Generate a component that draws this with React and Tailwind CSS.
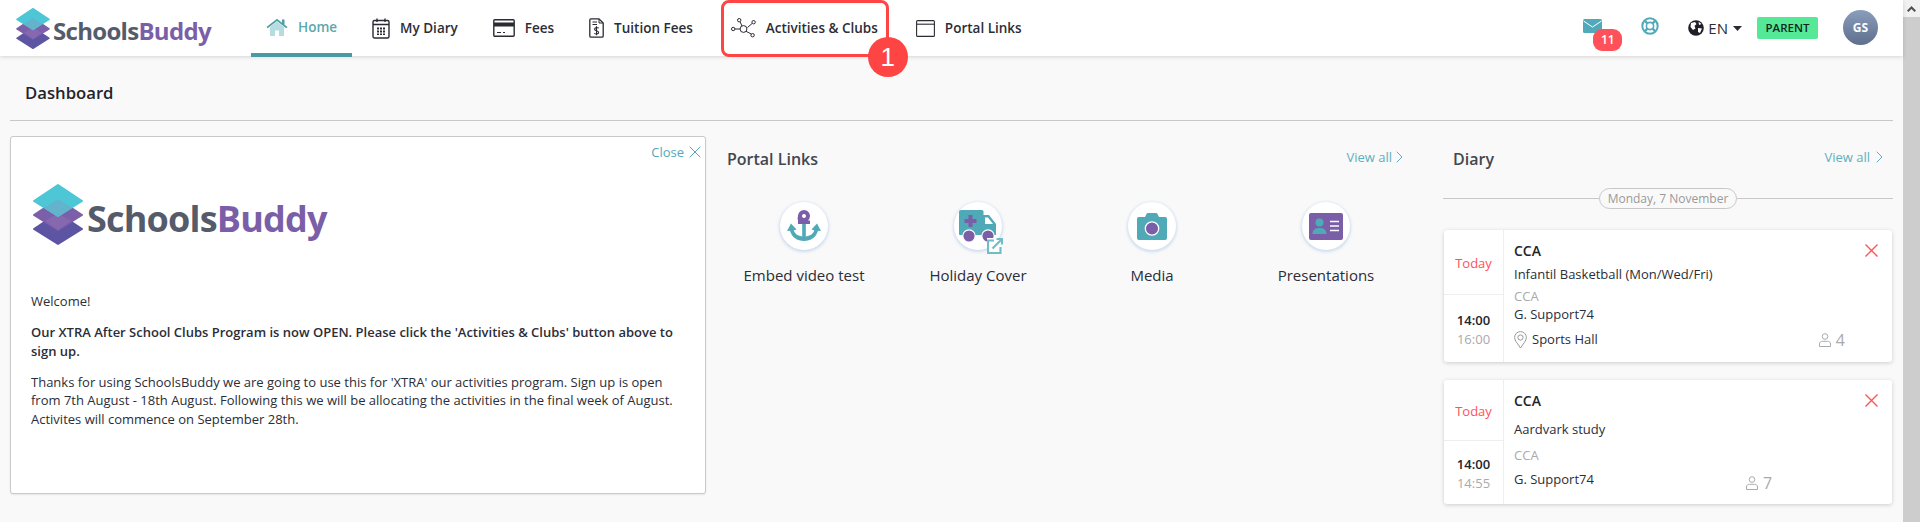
import React from "react";

function Logo({ className }) {
  return (
    <svg viewBox="0 0 50 61" className={className}>
      <g strokeLinejoin="round" strokeWidth="2">
        <polygon points="25,29 49,45 25,60 1,45" fill="#5d55a3" stroke="#5d55a3" />
        <polygon points="25,15 49,31 25,46 1,31" fill="#7c5fa9" stroke="#7c5fa9" />
        <polygon points="25,29 38,37 25,46 12,37" fill="#8568ae" />
        <polygon points="25,1 49,17 25,32 1,17" fill="#4dc6d6" stroke="#4dc6d6" />
        <polygon points="25,15 39,24 25,33 11,24" fill="#63b3cc" />
      </g>
    </svg>
  );
}

const HomeIcon = () => (
  <svg viewBox="0 0 22 18" className="w-[22px] h-[18px]">
    <path d="M4 9 L11 3.5 L18 9 V18 H13 V12.5 H9 V18 H4 Z" fill="#b5dde0" />
    <path d="M0.5 9 L11 0.8 L16 4.7 V1.5 H18.5 V6.7 L21.5 9 L20.3 10.2 L11 3 L1.7 10.2 Z" fill="#4f9ea6" />
  </svg>
);
const DiaryIcon = () => (
  <svg viewBox="0 0 18 21" className="w-[18px] h-[21px]" fill="none">
    <rect x="1" y="2.5" width="16" height="17.5" rx="1.5" stroke="#2b2b33" strokeWidth="1.4" />
    <path d="M1 6.5 H17 M5 0.5 V4 M13 0.5 V4" stroke="#2b2b33" strokeWidth="1.4" />
    <path d="M5 9.5 h2 v2 h-2z M8 9.5 h2 v2 h-2z M11 9.5 h2 v2 h-2z M5 12.5 h2 v2 h-2z M8 12.5 h2 v2 h-2z M11 12.5 h2 v2 h-2z M5 15.5 h2 v1.5 h-2z M8 15.5 h2 v1.5 h-2z M11 15.5 h2 v1.5 h-2z" fill="#2b2b33" />
  </svg>
);
const FeesIcon = () => (
  <svg viewBox="0 0 22 18" className="w-[22px] h-[18px]" fill="none">
    <rect x="0.8" y="0.8" width="20.4" height="16.4" rx="1" stroke="#2b2b33" strokeWidth="1.4" />
    <rect x="1" y="3.5" width="20" height="4" fill="#2b2b33" />
    <path d="M4 13.5 H8 M10 13.5 H12" stroke="#2b2b33" strokeWidth="1.2" />
  </svg>
);
const TuitionIcon = () => (
  <svg viewBox="0 0 15 20" className="w-[15px] h-[20px]" fill="none">
    <path d="M1.7 0.8 H10 L14.2 5 V18 a1.2 1.2 0 0 1 -1.2 1.2 H2 a1.2 1.2 0 0 1 -1.2 -1.2 V2 a1.2 1.2 0 0 1 .9 -1.2 Z" stroke="#2b2b33" strokeWidth="1.3" />
    <path d="M10 1 V5 H14 M3.5 4 H8 M3.5 6.5 H8" stroke="#2b2b33" strokeWidth="1" />
    <path d="M9.6 10.2 C9 9.3 5.6 9.2 5.6 11.2 C5.6 13.2 9.6 12.4 9.6 14.5 C9.6 16.3 6.2 16.3 5.4 15.2 M7.5 8.2 V17.2" stroke="#2b2b33" strokeWidth="1.1" />
  </svg>
);
const NetworkIcon = () => (
  <svg viewBox="0 0 25 20" className="w-[25px] h-[20px]" fill="none" stroke="#2b2b33" strokeWidth="1">
    <circle cx="2.2" cy="11" r="1.7" />
    <circle cx="8.2" cy="2.2" r="1.7" />
    <circle cx="22.6" cy="4.2" r="1.7" />
    <circle cx="21.6" cy="17.2" r="1.7" />
    <circle cx="12.5" cy="11" r="3.4" />
    <path d="M4 11 H9 M9.1 3.8 L11 8 M21.2 5.4 L16.5 9.5 M20.3 16 L15 13.3" />
  </svg>
);
const WindowIcon = () => (
  <svg viewBox="0 0 19 17" className="w-[19px] h-[17px]" fill="none" stroke="#2b2b33" strokeWidth="1.1">
    <rect x="0.6" y="0.6" width="17.8" height="15.8" rx="1" />
    <path d="M0.6 4.2 H18.4" />
  </svg>
);

const Tab = ({ icon, label, active, children, className = "" }) => (
  <div className={`relative h-[57px] flex items-center gap-[10px] px-[15px] pb-[1px] text-[13.5px] font-semibold ${active ? "border-b-[4px] border-[#4a9aa3] text-[#5ba7ae] pt-[2px] pb-0" : "text-[#2b2d38]"} ${className}`}>
    {icon}
    <span>{label}</span>
    {children}
  </div>
);

const Circle = ({ children }) => (
  <div className="relative w-[48px] h-[48px] rounded-full bg-white flex items-center justify-center shadow-[0_1px_3px_1px_rgba(170,195,230,0.55)]">
    {children}
  </div>
);

const Anchor = () => (
  <svg viewBox="0 0 34 32" className="w-[34px] h-[32px]">
    <path fillRule="evenodd" d="M17 0 a6 6 0 0 1 6 6 a6 6 0 0 1 -2.2 4.6 H23 V14 H11 V10.6 A6 6 0 0 1 11 6 A6 6 0 0 1 17 0 Z M17 4 a2 2 0 1 0 .01 0Z" fill="#7b5ea8" />
    <path d="M15.2 14 H18.8 V26.5 C23 26 26 24 27.4 20.5 L24.5 19.5 L30 13.5 L34 21 L31 20.8 C29 27.5 24 31 17 31 C10 31 5 27.5 3 20.8 L0 21 L4 13.5 L9.5 19.5 L6.6 20.5 C8 24 11 26 15.2 26.5 Z" fill="#50a9b6" />
  </svg>
);
const Ambulance = () => (
  <svg viewBox="0 0 38 32" className="w-[38px] h-[32px]">
    <path d="M2 0 H23 a1.5 1.5 0 0 1 1.5 1.5 V5 H30 L37 14 V25 H1 a1 1 0 0 1 -1 -1 V2 a2 2 0 0 1 2 -2Z" fill="#50a9b6" />
    <path d="M26 7.5 H29 L34 14 H26 Z" fill="#fff" />
    <path d="M9.5 5 H13.5 V9 H17.5 V13 H13.5 V17 H9.5 V13 H5.5 V9 H9.5 Z" fill="#7b5ea8" />
    <circle cx="10" cy="26" r="6.2" fill="#7b5ea8" stroke="#fff" strokeWidth="1.2" />
    <circle cx="29" cy="26" r="6.2" fill="#7b5ea8" stroke="#fff" strokeWidth="1.2" />
  </svg>
);
const ExternalBadge = () => (
  <svg viewBox="0 0 16 16" className="absolute right-[-1px] bottom-[-4px] w-[16px] h-[16px] bg-white" fill="none" stroke="#6fbdc6" strokeWidth="2.2">
    <path d="M7 2.5 H1 V15 H13.5 V9" />
    <path d="M5.5 10.5 L15 1 M9.5 1 H15 V6.5" />
  </svg>
);
const Camera = () => (
  <svg viewBox="0 0 30 27" className="w-[30px] h-[27px]">
    <path d="M2 4 H8 L9.5 1 a2 2 0 0 1 1.5 -1 H19 a2 2 0 0 1 1.5 1 L22 4 H28 a2 2 0 0 1 2 2 V25 a2 2 0 0 1 -2 2 H2 a2 2 0 0 1 -2 -2 V6 a2 2 0 0 1 2 -2Z" fill="#50a9b6" />
    <circle cx="15" cy="15.5" r="6.7" fill="#7b5ea8" stroke="#fff" strokeWidth="1.3" />
  </svg>
);
const IdCard = () => (
  <svg viewBox="0 0 34 27" className="w-[34px] h-[27px]">
    <rect width="34" height="27" rx="2" fill="#7b5ea8" />
    <circle cx="10.5" cy="9.5" r="4" fill="#50a9b6" />
    <path d="M3.5 21 C3.5 16 7 15 10.5 15 C14 15 17.5 16 17.5 21 Z" fill="#50a9b6" />
    <path d="M21 8.5 H30 M21 13 H30 M21 17.5 H30" stroke="#fff" strokeWidth="1.5" />
  </svg>
);

const PortalLink = ({ icon, label, badge }) => (
  <div className="flex flex-col items-center">
    <Circle>
      {icon}
      {badge && <ExternalBadge />}
    </Circle>
    <div className="mt-[15px] text-[15px] leading-[20px] text-[#2b2d38]">{label}</div>
  </div>
);

const ViewAll = ({ wide }) => (
  <div className={`flex items-center text-[13px] leading-[18px] text-[#5bb0bf] ${wide ? "gap-[6px]" : "gap-[4px]"}`}>
    <span>View all</span>
    <svg viewBox="0 0 7 12" className="w-[7px] h-[12px]" fill="none" stroke="#5bb0bf" strokeWidth="1">
      <path d="M0.7 0.7 L6 6 L0.7 11.3" />
    </svg>
  </div>
);

const RedX = () => (
  <svg viewBox="0 0 13 13" className="w-[13px] h-[13px] mt-[2px]" fill="none" stroke="#ff5159" strokeWidth="1.4">
    <path d="M0.5 0.5 L12.5 12.5 M12.5 0.5 L0.5 12.5" />
  </svg>
);

const Person = ({ className = "" }) => (
  <svg viewBox="0 0 12 14" className={`w-[12px] h-[14px] ${className}`} fill="none" stroke="#aaa" strokeWidth="1">
    <circle cx="6" cy="3.5" r="2.8" />
    <path d="M0.5 13.5 V11 C0.5 9 2 8.3 3.5 8.3 H8.5 C10 8.3 11.5 9 11.5 11 V13.5 Z" />
  </svg>
);

const Pin = () => (
  <svg viewBox="0 0 13 18" className="w-[13px] h-[18px]" fill="none" stroke="#999" strokeWidth="1">
    <path d="M6.5 17 C4 13 0.6 9.8 0.6 6.5 A5.9 5.9 0 0 1 12.4 6.5 C12.4 9.8 9 13 6.5 17 Z" />
    <circle cx="6.5" cy="6.5" r="2.6" />
  </svg>
);

const Card = ({ topH, end, height, children }) => (
  <div className="flex w-[448px] bg-white rounded-[3px] shadow-[0_1px_4px_rgba(0,0,0,0.18)] ml-[1px]" style={{ height }}>
    <div className="w-[60px] shrink-0 border-r border-[#eee] flex flex-col">
      <div className="flex items-center justify-center border-b border-[#eee] text-[13px] font-medium text-[#ff5159] pt-[4px]" style={{ height: topH }}>Today</div>
      <div className="flex-1 flex flex-col items-center justify-center text-[13px] leading-[19px] pt-[2px]">
        <span className="font-semibold text-[#22242c]">14:00</span>
        <span className="text-[#aaa]">{end}</span>
      </div>
    </div>
    <div className="flex-1 relative pl-[10px] pr-[14px]">{children}</div>
  </div>
);

export default function App() {
  return (
    <div className="flex h-[522px] w-[1920px] overflow-hidden bg-[#f9f9f9] font-['Open_Sans',sans-serif] text-[#2b2d38]">
      <div className="flex-1 min-w-0 flex flex-col">
        <header className="h-[56px] shrink-0 bg-white shadow-[0_1px_4px_rgba(0,0,0,0.15)] flex items-start relative z-10">
          <div className="w-[251px] h-[56px] flex items-center pl-[16px] shrink-0">
            <Logo className="w-[34px] h-[41px]" />
            <span className="text-[24px] font-bold tracking-[-0.7px] text-[#565b6c] mt-[5px] ml-[3px]">Schools<span className="text-[#7b5ea8]">Buddy</span></span>
          </div>
          <nav className="flex items-start gap-[5px]">
            <Tab icon={<HomeIcon />} label="Home" active />
            <Tab icon={<DiaryIcon />} label="My Diary" />
            <Tab icon={<FeesIcon />} label="Fees" />
            <Tab icon={<TuitionIcon />} label="Tuition Fees" />
            <Tab icon={<NetworkIcon />} label="Activities & Clubs" className="ml-[3px]">
              <div className="absolute left-[5px] right-[4px] top-0 h-[57px] border-[3px] border-[#ff4444] rounded-[8px]" />
              <div className="absolute left-[152px] top-[37px] w-[40px] h-[40px] rounded-full bg-[#ff4444] text-white text-[26px] font-['Liberation_Sans',sans-serif] font-normal flex items-center justify-center">1</div>
            </Tab>
            <Tab icon={<WindowIcon />} label="Portal Links" className="ml-[3px]" />
          </nav>
          <div className="ml-auto flex items-start pr-[25px]">
            <div className="relative w-[19px] h-[14px] mt-[19px]">
              <svg viewBox="0 0 19 14" className="w-[19px] h-[14px]">
                <rect width="19" height="14" rx="1.5" fill="#52a9bb" />
                <path d="M0.5 2 L9.5 8 L18.5 2" fill="none" stroke="#fff" strokeWidth="1" />
              </svg>
              <div className="absolute left-[10px] top-[10px] w-[29px] h-[22px] rounded-[9px] bg-[#ff5159] text-white text-[12px] font-semibold flex items-center justify-center">11</div>
            </div>
            <svg viewBox="0 0 18 18" className="w-[18px] h-[18px] mt-[17px] ml-[39px]" fill="none" stroke="#52a9bb">
              <circle cx="9" cy="9" r="7.7" strokeWidth="2" />
              <circle cx="9" cy="9" r="3.6" strokeWidth="1.6" />
              <path d="M3.5 3.5 L6.4 6.4 M14.5 3.5 L11.6 6.4 M3.5 14.5 L6.4 11.6 M14.5 14.5 L11.6 11.6" strokeWidth="2.4" />
            </svg>
            <svg viewBox="0 0 16 16" className="w-[16px] h-[16px] mt-[20px] ml-[29px]">
              <circle cx="8" cy="8" r="7.8" fill="#1f2027" />
              <path d="M3 3 L7 2 L8.5 4 L6.5 6 L7.5 8.5 L5 10 L2.5 7 Z M10 8 L14 8.5 L12 13 L10 12 Z M10.5 1.8 L13.5 4 L11 5 Z" fill="#fff" />
            </svg>
            <span className="text-[15px] leading-[20px] ml-[4px] mt-[18px] text-[#2b2d38]">EN</span>
            <svg viewBox="0 0 9 5" className="w-[9px] h-[5px] mt-[26px] ml-[5px]"><path d="M0 0 H9 L4.5 5 Z" fill="#2b2b33" /></svg>
            <div className="ml-[15px] mt-[17px] w-[61px] h-[22px] rounded-[2px] bg-[#55e897] text-[11.5px] font-semibold text-[#14261c] flex items-center justify-center">PARENT</div>
            <div className="ml-[25px] mt-[10px] w-[35px] h-[35px] rounded-full bg-gradient-to-b from-[#8a9dbb] to-[#5f6f8e] text-white text-[12px] font-bold flex items-center justify-center">GS</div>
          </div>
        </header>

        <main className="flex-1 min-h-0 px-[10px]">
          <div className="h-[65px] border-b border-[#c8c8c8] pl-[15px] flex items-center text-[16.7px] font-semibold text-[#22242c] pt-[9px]">Dashboard</div>
          <div className="flex mt-[15px]">
            <section className="w-[696px] h-[358px] shrink-0 bg-white border border-[#c9c9c9] rounded-[3px] shadow-[0_1px_2px_rgba(0,0,0,0.08)] pl-[20px] pr-[4px] pt-[6px]">
              <div className="flex justify-end items-center gap-[5px] text-[13px] leading-[18px] text-[#52a9bb]">
                <span>Close</span>
                <svg viewBox="0 0 12 12" className="w-[12px] h-[12px]" fill="none" stroke="#52a9bb" strokeWidth="1"><path d="M0.7 0.7 L11.3 11.3 M11.3 0.7 L0.7 11.3" /></svg>
              </div>
              <div className="flex items-center mt-[22px]">
                <Logo className="w-[50px] h-[61px] ml-[2px] shrink-0" />
                <span className="text-[36px] font-bold tracking-[-0.8px] text-[#565b6c] mt-[9px] ml-[4px]">Schools<span className="text-[#7b5ea8]">Buddy</span></span>
              </div>
              <div className="mt-[46px] pr-[15px] text-[13px] leading-[18.5px] text-[#2b2d38]">
                <p>Welcome!</p>
                <p className="mt-[12.5px] font-semibold">Our XTRA After School Clubs Program is now OPEN. Please click the 'Activities &amp; Clubs' button above to sign up.</p>
                <p className="mt-[12.5px]">Thanks for using SchoolsBuddy we are going to use this for 'XTRA' our activities program. Sign up is open from 7th August - 18th August. Following this we will be allocating the activities in the final week of August. Activites will commence on September 28th.</p>
              </div>
            </section>

            <section className="w-[696px] shrink-0 ml-[11px] pl-[10px] pr-[10px]">
              <div className="flex justify-between items-start h-[62px] pt-[12px]">
                <h2 className="text-[16px] leading-[22px] font-semibold text-[#44464f]">Portal Links</h2>
                <ViewAll />
              </div>
              <div className="grid grid-cols-4 -mx-[10px] mt-[4px]">
                <PortalLink icon={<Anchor />} label="Embed video test" />
                <PortalLink icon={<Ambulance />} label="Holiday Cover" badge />
                <PortalLink icon={<Camera />} label="Media" />
                <PortalLink icon={<IdCard />} label="Presentations" />
              </div>
            </section>

            <section className="w-[450px] shrink-0 ml-[30px]">
              <div className="flex justify-between items-start h-[52px] pt-[12px] pl-[10px] pr-[10px]">
                <h2 className="text-[16px] leading-[22px] font-semibold text-[#44464f]">Diary</h2>
                <ViewAll wide />
              </div>
              <div className="flex items-center h-[21px]">
                <div className="flex-1 h-px bg-[#c8c8c8]" />
                <div className="h-[21px] w-[138px] rounded-full border border-[#c8c8c8] text-[12px] text-[#999] flex items-center justify-center">Monday, 7 November</div>
                <div className="flex-1 h-px bg-[#c8c8c8]" />
              </div>
              <div className="mt-[21px] flex flex-col gap-[18px]">
                <Card topH={65} end="16:00" height={132}>
                  <div className="flex justify-between pt-[12px]">
                    <span className="text-[14px] leading-[18px] font-semibold text-[#22242c]">CCA</span>
                    <RedX />
                  </div>
                  <div className="text-[13px] leading-[18px] mt-[5px]">Infantil Basketball (Mon/Wed/Fri)</div>
                  <div className="text-[13px] leading-[18px] mt-[4px] text-[#aaa]">CCA</div>
                  <div className="text-[13px] leading-[18px]">G. Support74</div>
                  <div className="flex items-center mt-[7px]">
                    <Pin />
                    <span className="text-[13px] ml-[5px]">Sports Hall</span>
                    <Person className="ml-[221px]" />
                    <span className="text-[16px] leading-[20px] text-[#aaa] ml-[5px]">4</span>
                  </div>
                </Card>
                <Card topH={61} end="14:55" height={124}>
                  <div className="flex justify-between pt-[12px]">
                    <span className="text-[14px] leading-[18px] font-semibold text-[#22242c]">CCA</span>
                    <RedX />
                  </div>
                  <div className="text-[13px] leading-[18px] mt-[10px]">Aardvark study</div>
                  <div className="text-[13px] leading-[18px] mt-[8px] text-[#aaa]">CCA</div>
                  <div className="flex items-start mt-[6px]">
                    <span className="text-[13px] leading-[18px]">G. Support74</span>
                    <Person className="ml-[152px] mt-[6px]" />
                    <span className="text-[16px] leading-[20px] text-[#aaa] ml-[5px] mt-[3px]">7</span>
                  </div>
                </Card>
              </div>
            </section>
          </div>
        </main>
      </div>
      <div className="w-[17px] shrink-0 bg-[#cdcdcd] flex flex-col">
        <div className="h-[17px] bg-[#f1f1f1] flex items-center justify-center">
          <svg viewBox="0 0 9 6" className="w-[9px] h-[6px]" fill="none" stroke="#505050" strokeWidth="2"><path d="M0.7 5.3 L4.5 1.5 L8.3 5.3" /></svg>
        </div>
      </div>
    </div>
  );
}
